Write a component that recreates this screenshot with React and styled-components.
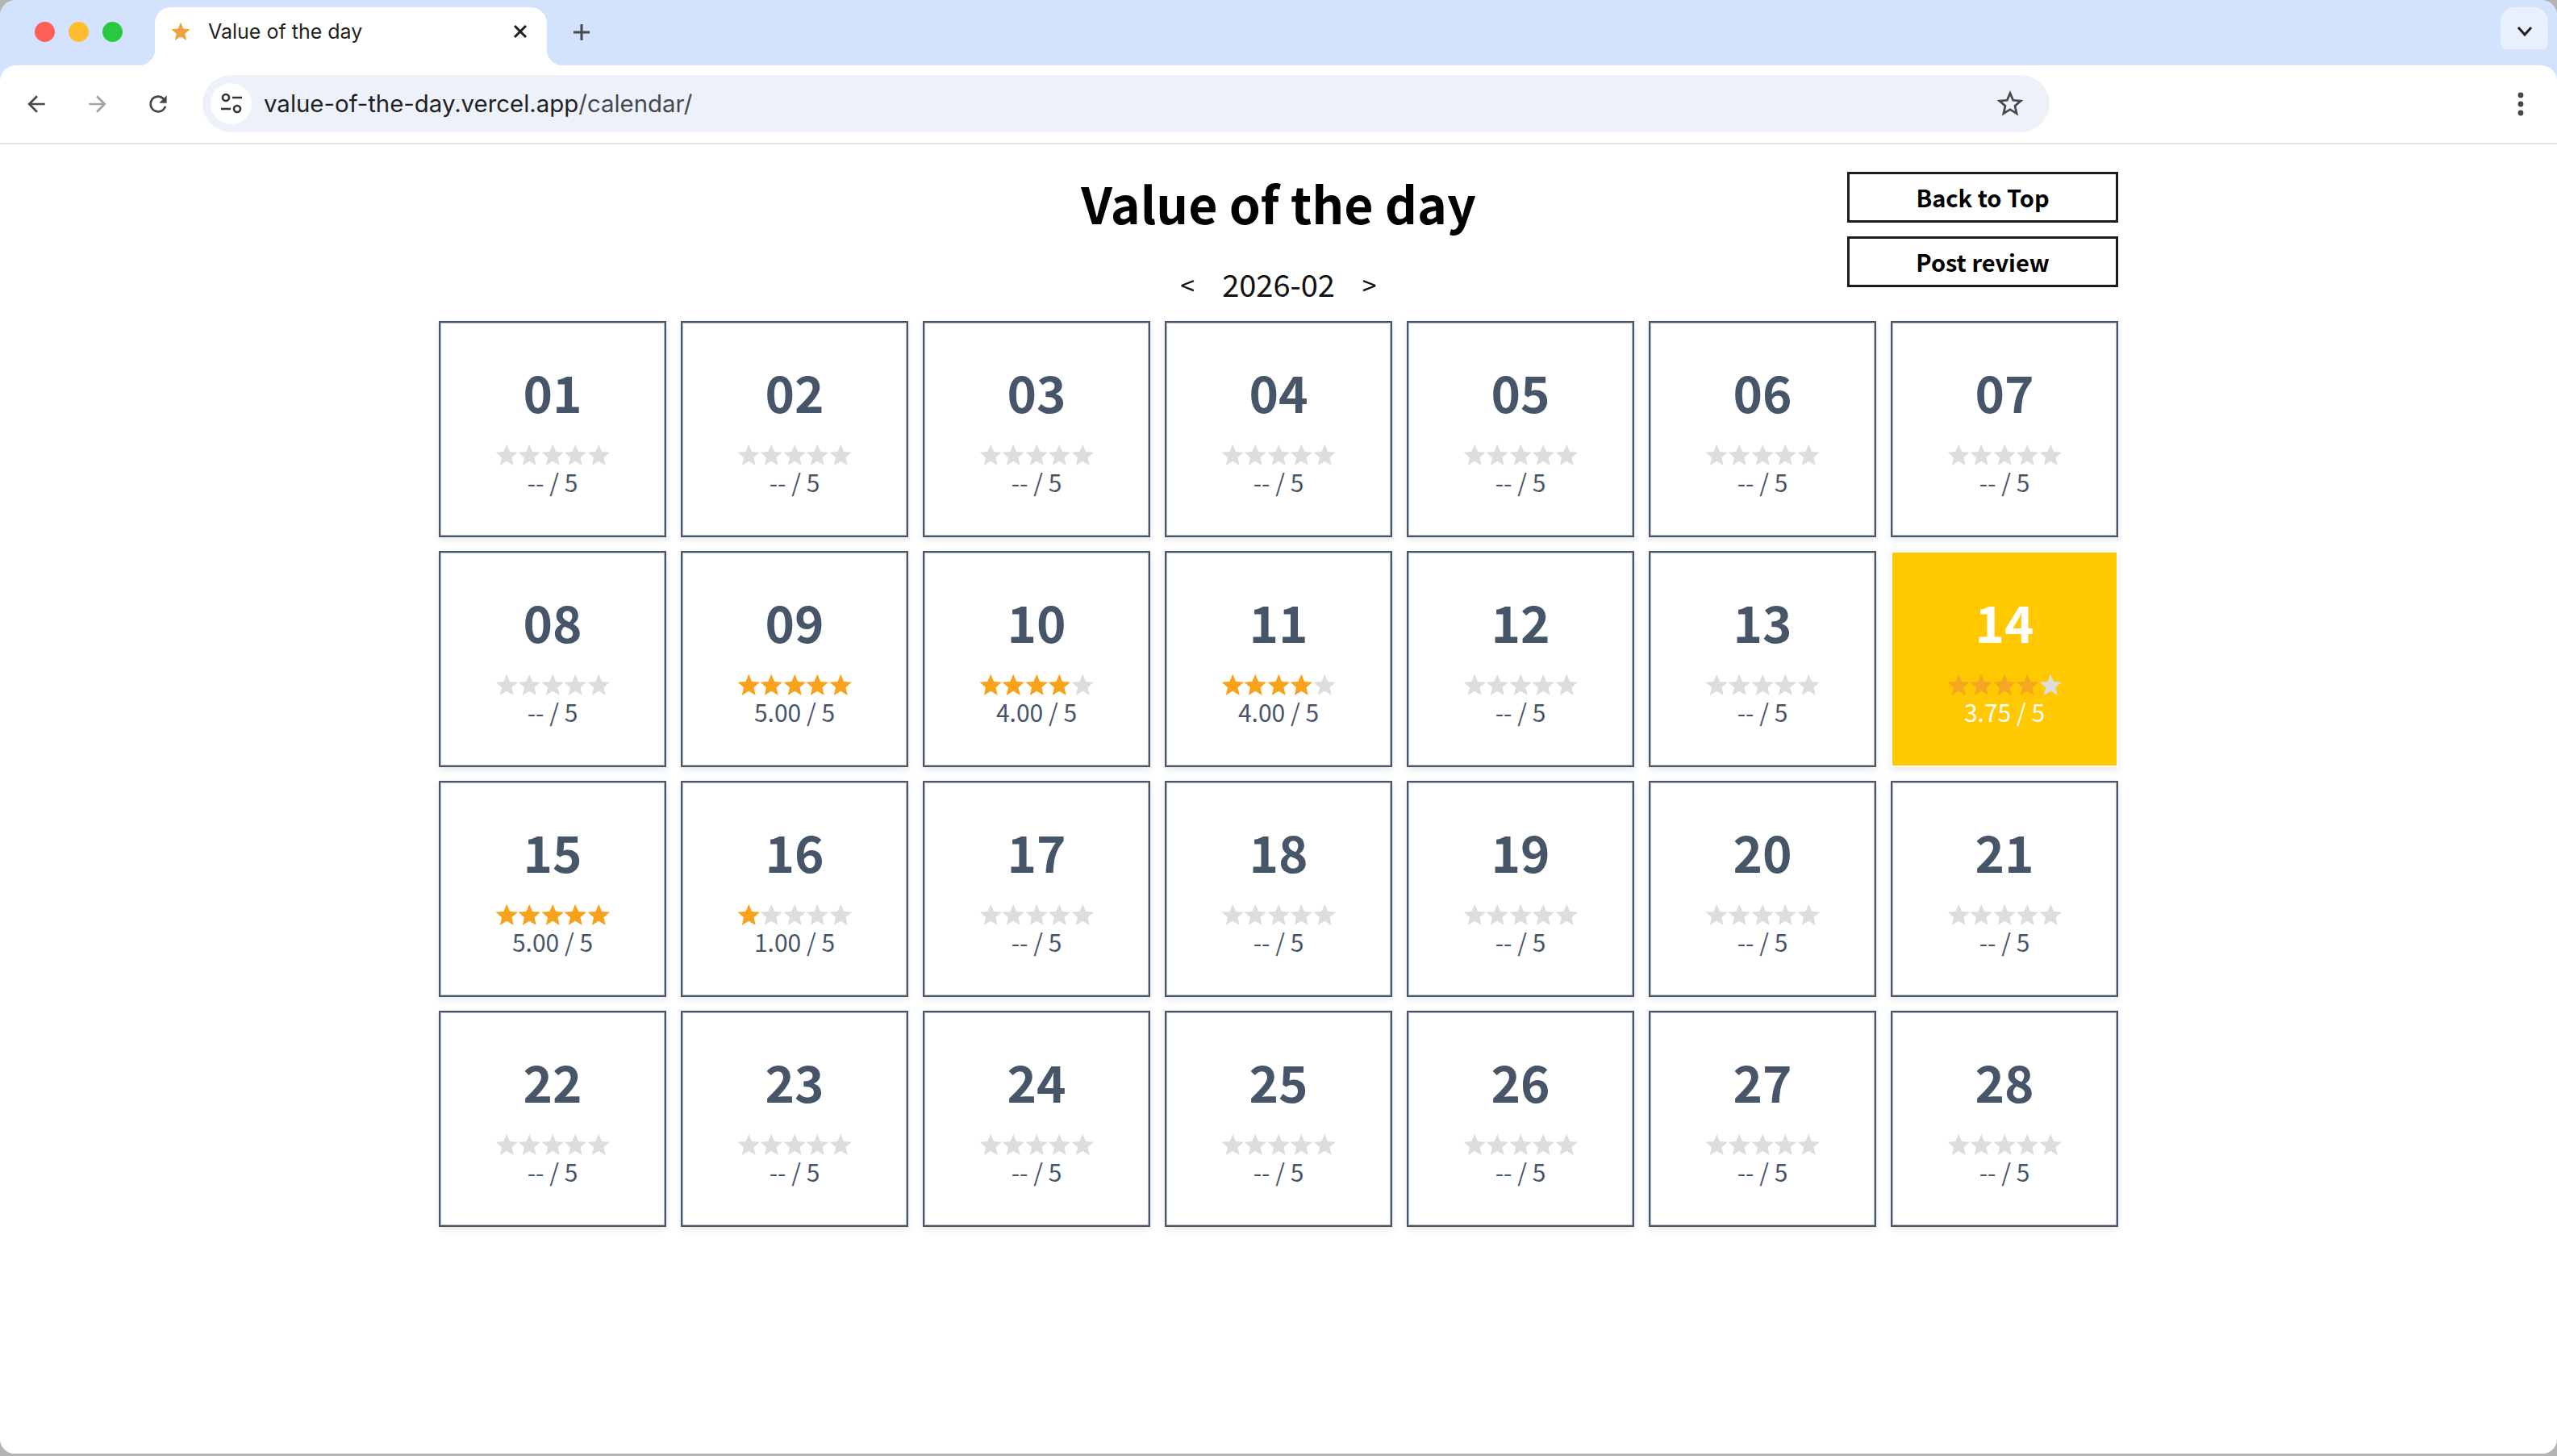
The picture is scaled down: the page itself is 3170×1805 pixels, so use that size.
import React from "react";
import styled, { createGlobalStyle } from "styled-components";

const GlobalStyle = createGlobalStyle`
  * { box-sizing: border-box; }
  html, body { margin: 0; padding: 0; background: #b4b4b4; }
  body { font-family: "Noto Sans CJK JP", "Noto Sans", sans-serif; }
`;

const Window = styled.div`
  width: 3170px;
  height: 1802px;
  display: flex;
  flex-direction: column;
  overflow: hidden;
  background: #fff;
  border-radius: 20px 20px 18px 18px;
`;

const TabStrip = styled.div`
  height: 81px;
  flex: none;
  display: flex;
  align-items: flex-end;
  padding: 0 11px 0 43px;
  background: #d3e3fd;
`;

const Lights = styled.div`
  display: flex;
  gap: 17px;
  align-self: flex-start;
  margin-top: 27px;
`;

const Light = styled.span`
  width: 25px;
  height: 25px;
  border-radius: 50%;
  background: ${(p) => p.$color};
`;

const Tab = styled.div`
  position: relative;
  width: 486px;
  height: 72px;
  margin-left: 40px;
  padding: 0 20px 12px 20px;
  display: flex;
  align-items: center;
  gap: 22px;
  background: #fff;
  border-radius: 20px 20px 0 0;
  font-family: Inter, "Liberation Sans", sans-serif;
  font-size: 25px;
  color: #1f1f1f;

  &::before, &::after {
    content: "";
    position: absolute;
    bottom: 0;
    width: 20px;
    height: 20px;
  }
  &::before {
    left: -20px;
    background: radial-gradient(circle at 0 0, #d3e3fd 20px, #fff 20.5px);
  }
  &::after {
    right: -20px;
    background: radial-gradient(circle at 100% 0, #d3e3fd 20px, #fff 20.5px);
  }
`;

const TabTitle = styled.span`
  flex: 1;
  white-space: nowrap;
`;

const TabClose = styled.svg`
  width: 20px;
  height: 20px;
  margin-right: 3px;
  stroke: #1f1f1f;
  stroke-width: 3;
  fill: none;
`;

const StripButton = styled.div`
  display: flex;
  align-items: center;
  justify-content: center;
  align-self: flex-start;
  margin-top: 27px;
  margin-left: 30px;
  width: 26px;
  height: 26px;
`;

const ChevronButton = styled.div`
  display: flex;
  align-items: center;
  justify-content: center;
  align-self: flex-start;
  margin: 9px 0 0 auto;
  width: 59px;
  height: 59px;
  border-radius: 18px;
  background: #e9f0fd;
`;

const Toolbar = styled.div`
  height: 98px;
  flex: none;
  display: flex;
  align-items: center;
  padding: 0 30px 0 29px;
  background: #fff;
  border-bottom: 2px solid #e3e3e3;
  gap: 43.5px;
  box-shadow: 0 -20px 0 0 #d3e3fd;
  border-radius: 20px 20px 0 0;
`;

const NavIcon = styled.svg`
  width: 32px;
  height: 32px;
  flex: none;
  fill: ${(p) => (p.$muted ? "#a2a2a2" : "#474747")};
`;

const AddressBar = styled.div`
  width: 2290px;
  height: 71px;
  margin-left: -4.5px;
  margin-bottom: 2px;
  padding: 0 33px 0 10px;
  display: flex;
  align-items: center;
  border-radius: 36px;
  background: #ecf1fa;
  font-family: Inter, "Liberation Sans", sans-serif;
  font-size: 29.4px;
  color: #1f1f1f;
`;

const SiteBadge = styled.span`
  flex: none;
  width: 51px;
  height: 51px;
  margin-right: 15px;
  border-radius: 50%;
  background: #fff;
  display: flex;
  align-items: center;
  justify-content: center;
`;

const UrlMuted = styled.span`
  color: #474747;
`;

const UrlText = styled.span`
  flex: 1;
  white-space: nowrap;
`;

const MenuDots = styled.svg`
  width: 10px;
  height: 32px;
  margin-left: auto;
  margin-right: 10px;
  fill: #474747;
`;

const Page = styled.main`
  flex: 1;
  width: 2082px;
  margin: 0 auto;
`;

const Header = styled.header`
  height: 219px;
  display: grid;
  grid-template-columns: 1fr auto 1fr;
`;

const HeaderCenter = styled.div`
  display: flex;
  flex-direction: column;
  align-items: center;
  padding-top: 34px;
`;

const Title = styled.h1`
  margin: 0;
  font-size: 62.5px;
  line-height: 76px;
  font-weight: 700;
  color: #000;
  white-space: nowrap;
`;

const MonthNav = styled.div`
  display: flex;
  align-items: center;
  gap: 34px;
  margin-top: 38px;
  font-size: 38px;
  line-height: 50px;
  color: #111;
`;

const MonthArrow = styled.span`
  font-size: 32px;
`;

const HeaderActions = styled.div`
  display: flex;
  flex-direction: column;
  align-items: flex-end;
  gap: 17px;
  padding-top: 34px;
`;

const ActionButton = styled.a`
  width: 336px;
  height: 63px;
  padding-bottom: 2px;
  display: flex;
  align-items: center;
  justify-content: center;
  border: 3px solid #1c1c1c;
  font-size: 29px;
  font-weight: 700;
  color: #000;
`;

const Grid = styled.div`
  display: grid;
  grid-template-columns: repeat(7, 1fr);
  grid-auto-rows: 268px;
  gap: 17px 18px;
`;

const DayCard = styled.div`
  display: flex;
  flex-direction: column;
  align-items: center;
  padding-top: 42px;
  border: 2px solid ${(p) => (p.$today ? "#fff" : "#475569")};
  background: ${(p) => (p.$today ? "#ffc800" : "#fff")};
  color: ${(p) => (p.$today ? "#fff" : "#475569")};
  box-shadow: ${(p) => (p.$today ? "" : "inset 0 0 0 1px rgba(71, 85, 105, 0.4),")} 0 3px 8px rgba(15, 23, 42, 0.1);
`;

const DayNumber = styled.div`
  font-size: 62px;
  line-height: 86px;
  font-weight: 700;
`;

const StarRow = styled.div`
  display: flex;
  margin-top: 22px;
  height: 28px;
`;

const StarIcon = styled.svg`
  width: 28.5px;
  height: 28px;
  fill: ${(p) => (p.$on ? (p.$today ? "#f5a623" : "#f8a11b") : "#dddddd")};
`;

const Score = styled.div`
  margin-top: 1px;
  font-size: 30px;
  line-height: 36px;
`;

const ratings = { 9: 5, 10: 4, 11: 4, 14: 3.75, 15: 5, 16: 1 };
const days = Array.from({ length: 28 }, (_, i) => i + 1);

const Stars = ({ value, today }) => (
  <StarRow>
    {[1, 2, 3, 4, 5].map((n) => (
      <StarIcon key={n} viewBox="0 0 24 24" $today={today} $on={n <= Math.ceil(value || 0)}>
        <path d="M12 .6l3.3 7.9 8.5.7-6.5 5.6 2 8.3L12 18.6l-7.3 4.5 2-8.3L.2 9.2l8.5-.7z" />
      </StarIcon>
    ))}
  </StarRow>
);

export default function App() {
  return (
    <Window>
      <GlobalStyle />
      <TabStrip>
        <Lights>
          <Light $color="#ff5f57" />
          <Light $color="#febc2e" />
          <Light $color="#28c840" />
        </Lights>
        <Tab>
          <svg width="24" height="24" viewBox="0 0 24 24" fill="#eda33b">
            <path d="M12 .6l3.3 7.9 8.5.7-6.5 5.6 2 8.3L12 18.6l-7.3 4.5 2-8.3L.2 9.2l8.5-.7z" />
          </svg>
          <TabTitle>Value of the day</TabTitle>
          <TabClose viewBox="0 0 20 20">
            <path d="M3 3l14 14M17 3L3 17" />
          </TabClose>
        </Tab>
        <StripButton>
          <svg width="24" height="24" viewBox="0 0 24 24" stroke="#474747" strokeWidth="3" fill="none">
            <path d="M12 2v20M2 12h20" />
          </svg>
        </StripButton>
        <ChevronButton>
          <svg width="20" height="14" viewBox="0 0 20 14" stroke="#1f1f1f" strokeWidth="3" fill="none">
            <path d="M2 2l8 9 8-9" />
          </svg>
        </ChevronButton>
      </TabStrip>
      <Toolbar>
        <NavIcon viewBox="0 0 24 24">
          <path d="M20 11H7.83l5.59-5.59L12 4l-8 8 8 8 1.41-1.41L7.83 13H20v-2z" />
        </NavIcon>
        <NavIcon viewBox="0 0 24 24" $muted>
          <path d="M4 11h12.17l-5.59-5.59L12 4l8 8-8 8-1.41-1.41L16.17 13H4v-2z" />
        </NavIcon>
        <NavIcon viewBox="0 0 24 24">
          <path d="M17.65 6.35A7.958 7.958 0 0 0 12 4c-4.42 0-7.99 3.58-7.99 8s3.57 8 7.99 8c3.73 0 6.84-2.55 7.73-6h-2.08A5.99 5.99 0 0 1 12 18c-3.31 0-6-2.69-6-6s2.69-6 6-6c1.66 0 3.14.69 4.22 1.78L13 11h7V4l-2.35 2.35z" />
        </NavIcon>
        <AddressBar>
          <SiteBadge>
            <svg width="28" height="28" viewBox="0 0 28 28" stroke="#333" strokeWidth="2.6" fill="none">
              <circle cx="7" cy="7" r="4" />
              <path d="M15 7h12M1 21h12" />
              <circle cx="21" cy="21" r="4" />
            </svg>
          </SiteBadge>
          <UrlText>
            value-of-the-day.vercel.app<UrlMuted>/calendar/</UrlMuted>
          </UrlText>
          <svg width="32" height="32" viewBox="0 0 24 24" stroke="#474747" strokeWidth="2" fill="none">
            <path d="M12 2.6l2.8 6.6 7.1.6-5.4 4.7 1.6 7-6.1-3.7-6.1 3.7 1.6-7-5.4-4.7 7.1-.6z" />
          </svg>
        </AddressBar>
        <MenuDots viewBox="0 0 10 32">
          <circle cx="5" cy="5" r="3.4" />
          <circle cx="5" cy="16" r="3.4" />
          <circle cx="5" cy="27" r="3.4" />
        </MenuDots>
      </Toolbar>
      <Page>
        <Header>
          <div />
          <HeaderCenter>
            <Title>Value of the day</Title>
            <MonthNav>
              <MonthArrow>&lt;</MonthArrow>
              <span>2026-02</span>
              <MonthArrow>&gt;</MonthArrow>
            </MonthNav>
          </HeaderCenter>
          <HeaderActions>
            <ActionButton>Back to Top</ActionButton>
            <ActionButton>Post review</ActionButton>
          </HeaderActions>
        </Header>
        <Grid>
          {days.map((d) => {
            const today = d === 14;
            const value = ratings[d];
            return (
              <DayCard key={d} $today={today}>
                <DayNumber>{String(d).padStart(2, "0")}</DayNumber>
                <Stars value={value} today={today} />
                <Score>{value ? `${value.toFixed(2)} / 5` : "-- / 5"}</Score>
              </DayCard>
            );
          })}
        </Grid>
      </Page>
    </Window>
  );
}
